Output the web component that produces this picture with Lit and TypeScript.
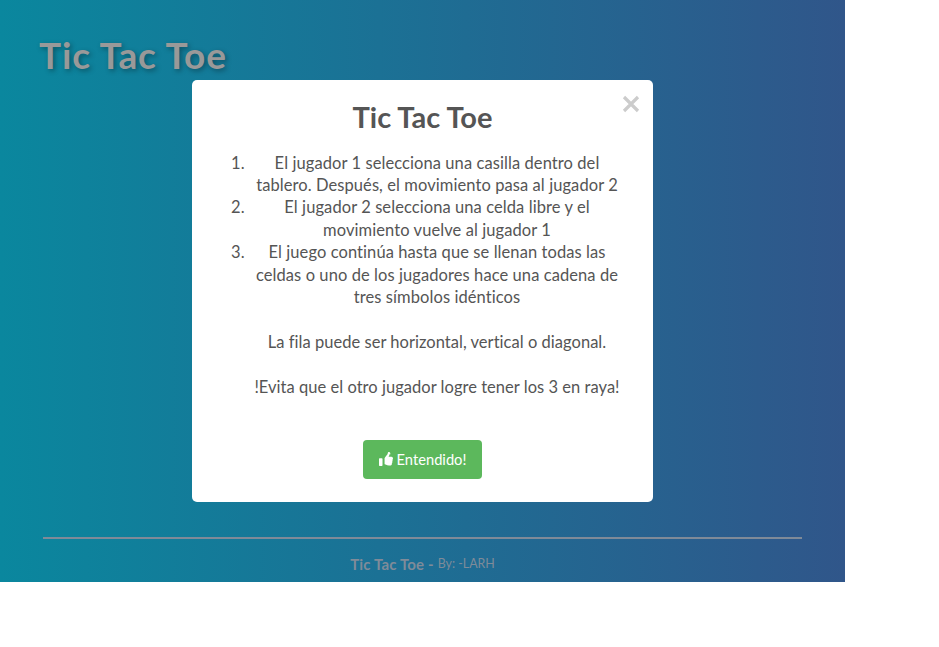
import { LitElement, html, css } from "lit";
import { customElement } from "lit/decorators.js";

@customElement("app-root")
export class AppRoot extends LitElement {
  static styles = css`
    :host {
      display: block;
      position: relative;
      width: 845px;
      height: 582px;
      overflow: hidden;
      font-family: "Lato", "Open Sans", sans-serif;
      background: linear-gradient(90deg, #0a879e 0%, #30568a 100%);
    }
    .page {
      display: flex;
      flex-direction: column;
      height: 100%;
      box-sizing: border-box;
      padding: 31px 43px 0 39px;
    }
    h1 {
      margin: 0;
      font-size: 37px;
      line-height: 48px;
      font-weight: 700;
      color: #999;
      letter-spacing: 0.85px;
      text-shadow: 2px 2px 5px rgba(0, 0, 0, 0.35);
      flex: 1;
    }
    .rule {
      height: 2px;
      background: #7f8a98;
      margin: 0 0 0 4px;
    }
    footer {
      height: 43px;
      display: flex;
      align-items: center;
      justify-content: center;
      gap: 4px;
      padding: 6px 0 0 4px;
      box-sizing: border-box;
      color: #7f8b99;
      font-size: 12.4px;
    }
    footer b { font-size: 15px; letter-spacing: 0.15px; }
    .modal {
      position: absolute;
      left: 192px;
      top: 80px;
      width: 461px;
      height: 422px;
      box-sizing: border-box;
      padding: 20px 28px 0 17px;
      background: #fff;
      border-radius: 5px;
      color: #555;
      text-align: center;
    }
    .close {
      position: absolute;
      top: 15px;
      right: 13px;
      width: 18px;
      height: 18px;
    }
    h2 {
      margin: 0 -11px 17.5px 0;
      font-size: 29px;
      line-height: 34px;
      font-weight: 700;
      color: #555;
    }
    ol {
      margin: 0;
      padding: 0 0 0 40px;
      font-size: 16.5px;
      line-height: 22.4px;
      letter-spacing: 0.08px;
    }
    .note {
      margin: 22.4px 0 0 40px;
      font-size: 16.5px;
      line-height: 22.4px;
      letter-spacing: 0.03px;
    }
    .actions {
      margin: 42px -11px 0 0;
      display: flex;
      justify-content: center;
    }
    button {
      display: flex;
      align-items: center;
      justify-content: center;
      gap: 4px;
      width: 119px;
      height: 39px;
      padding: 0;
      border: 0;
      border-radius: 4px;
      background: #5cb85c;
      color: #fff;
      font: inherit;
      font-size: 14.7px;
    }
    button svg { width: 14px; height: 14px; }
  `;

  render() {
    return html`
      <div class="page">
        <h1>Tic Tac Toe</h1>
        <div class="rule"></div>
        <footer><b>Tic Tac Toe -</b> <span>By: -LARH</span></footer>
      </div>
      <div class="modal">
        <svg class="close" viewBox="0 0 18 18" aria-label="close">
          <path d="M2 2L16 16M16 2L2 16" stroke="#ccc" stroke-width="3.2" fill="none" />
        </svg>
        <h2>Tic Tac Toe</h2>
        <ol>
          <li>El jugador 1 selecciona una casilla dentro del tablero. Después, el movimiento pasa al jugador 2</li>
          <li>El jugador 2 selecciona una celda libre y el movimiento vuelve al jugador 1</li>
          <li>El juego continúa hasta que se llenan todas las celdas o uno de los jugadores hace una cadena de tres símbolos idénticos</li>
        </ol>
        <p class="note">La fila puede ser horizontal, vertical o diagonal.</p>
        <p class="note">!Evita que el otro jugador logre tener los 3 en raya!</p>
        <div class="actions">
          <button>
            <svg viewBox="0 0 512 512"><path fill="#fff" d="M104 224H24c-13 0-24 11-24 24v240c0 13 11 24 24 24h80c13 0 24-11 24-24V248c0-13-11-24-24-24zM384 81c0 42-26 66-33 95h102c33 0 59 28 59 58 0 18-8 37-20 50 10 22 8 53-8 74 8 22-1 50-15 65 4 16 2 29-5 40-18 26-62 27-99 27h-3c-42 0-76-15-103-27-14-6-32-14-45-14-6 0-10-5-10-11V224c0-3 1-6 3-8 39-39 56-80 88-112 15-15 20-37 25-59 5-18 14-45 32-45 22 0 66 7 66 81z"/></svg>
            Entendido!
          </button>
        </div>
      </div>
    `;
  }
}
